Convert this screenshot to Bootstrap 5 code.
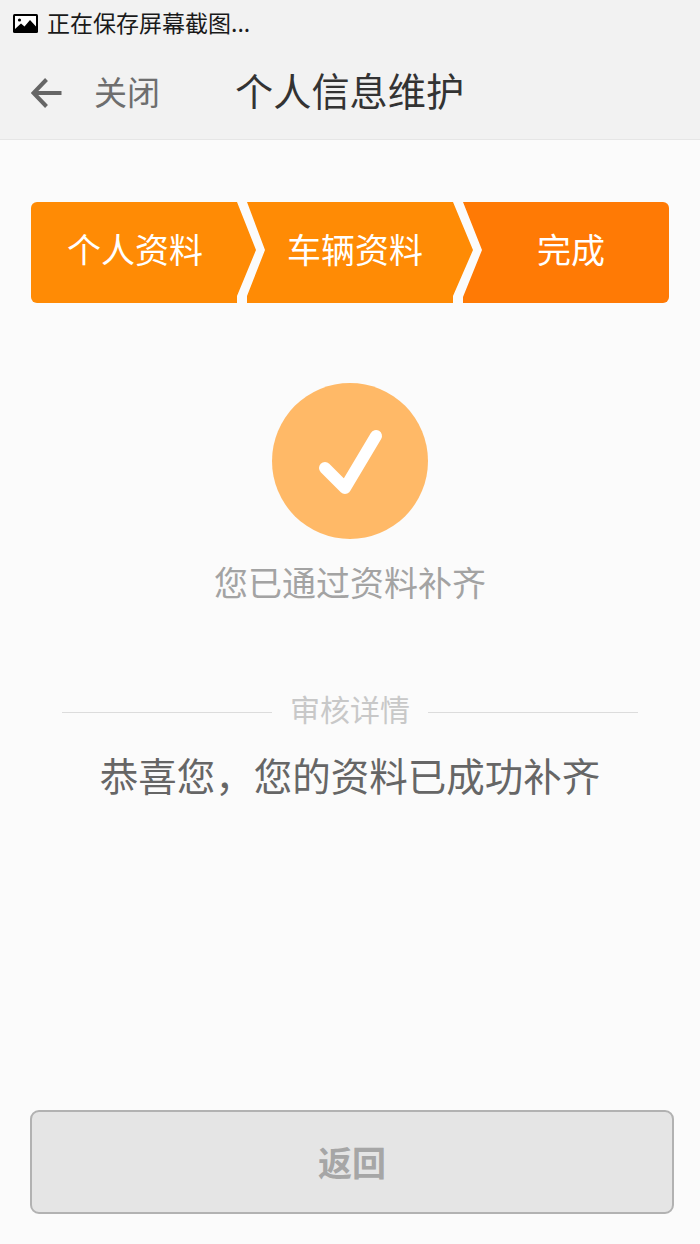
<!DOCTYPE html>
<html lang="zh-CN">
<head>
<meta charset="utf-8">
<title>个人信息维护</title>
<link href="https://cdn.jsdelivr.net/npm/bootstrap@5.3.0/dist/css/bootstrap.min.css" rel="stylesheet">
<style>
html,body{height:100%;}
body{background:#fbfbfb;font-family:"Noto Sans CJK SC","Liberation Sans",sans-serif;overflow:hidden;}
.shell{height:1244px;width:700px;}
.topzone{background:#f2f2f2;border-bottom:1px solid #e6e6e6;height:140px;}
.statusline{height:46px;padding-left:13px;gap:9px;font-size:23px;line-height:46px;color:#1a1a1a;}
.statusline span{margin-top:-3px;}
.headline{height:93px;padding-left:31px;}
.closer{font-size:33px;color:#6e6e6e;margin-left:31px;line-height:1;margin-bottom:2px;}
.pagetitle{font-size:38.200px;color:#333;margin:0 0 5px 75px;font-weight:400;line-height:1;}
.stepper{margin:62px 31px 0;height:101px;}
.stepitem{height:101px;color:#fff;font-size:34px;line-height:1;padding-bottom:8px;}
.step-a{width:225px;background:#ff8b05;border-radius:6px 0 0 6px;padding-right:17px;clip-path:polygon(0 0,206px 0,225px 48px,206px 94px,206px 101px,0 101px);}
.step-b{width:226px;margin-left:-9px;background:#ff8b05;padding-left:8px;padding-right:18px;clip-path:polygon(0 0,206px 0,226px 48px,206px 94px,206px 101px,0 101px,0 94px,18px 48px);}
.step-c{width:206px;margin-left:-10px;background:#ff7a05;border-radius:0 6px 6px 0;padding-left:10px;clip-path:polygon(0 0,206px 0,206px 101px,0 101px,0 95px,19px 48px);}
.okcircle{width:156px;height:156px;background:#ffb967;margin-top:80px;}
.oknote{font-size:34px;color:#a3a3a3;line-height:1;margin-top:26px;}
.detailrow{margin:94px 62px 0;gap:18px;color:#c8c8c8;font-size:30px;line-height:1;}
.ruleline{height:1px;background:#dcdcdc;margin-top:9px;}
.detailtext{font-size:38.500px;color:#666;line-height:1;margin-top:32px;}
.backbtn{margin:0 26px 30px 30px;width:644px;height:104px;background:#e5e5e5;border:2px solid #b2b2b2;border-radius:9px;color:#a6a6a6;font-size:34px;font-weight:700;line-height:1;}
.backbtn:hover,.backbtn:active{background:#e5e5e5;color:#a6a6a6;border-color:#b2b2b2;}
</style>
</head>
<body>
<div class="shell d-flex flex-column">
  <header class="topzone">
    <div class="statusline d-flex align-items-center">
      <svg width="25" height="19" viewBox="0 0 25 19" aria-hidden="true"><rect width="25" height="19" rx="1.500" fill="#000"/><rect x="2" y="2" width="21" height="13" fill="#fff"/><circle cx="6.500" cy="6" r="1.600" fill="#000"/><path d="M2 15 L8 9.500 L11.500 12.500 L17 6 L23 12.500 V15 Z" fill="#000"/></svg>
      <span>正在保存屏幕截图...</span>
    </div>
    <div class="headline d-flex align-items-center">
      <svg width="32" height="32" viewBox="0 0 32 32" aria-hidden="true"><path d="M30.500 16 H3 M15.500 2.500 L2.500 16 L15.500 29.500" fill="none" stroke="#666" stroke-width="4"/></svg>
      <span class="closer">关闭</span>
      <h1 class="pagetitle">个人信息维护</h1>
    </div>
  </header>
  <div class="stepper d-flex">
    <div class="stepitem step-a d-flex align-items-center justify-content-center">个人资料</div>
    <div class="stepitem step-b d-flex align-items-center justify-content-center">车辆资料</div>
    <div class="stepitem step-c d-flex align-items-center justify-content-center">完成</div>
  </div>
  <div class="d-flex flex-column align-items-center">
    <div class="okcircle rounded-circle d-flex align-items-center justify-content-center">
      <svg width="156" height="156" viewBox="0 0 156 156" aria-hidden="true"><path d="M53 85 L73 105 L104 53" fill="none" stroke="#fff" stroke-width="12" stroke-linecap="round" stroke-linejoin="round"/></svg>
    </div>
    <div class="oknote">您已通过资料补齐</div>
  </div>
  <div class="detailrow d-flex align-items-center">
    <div class="ruleline flex-grow-1"></div>
    <span>审核详情</span>
    <div class="ruleline flex-grow-1"></div>
  </div>
  <div class="detailtext text-center">恭喜您&#xFF0C;您的资料已成功补齐</div>
  <button type="button" class="btn backbtn mt-auto">返回</button>
</div>
</body>
</html>
